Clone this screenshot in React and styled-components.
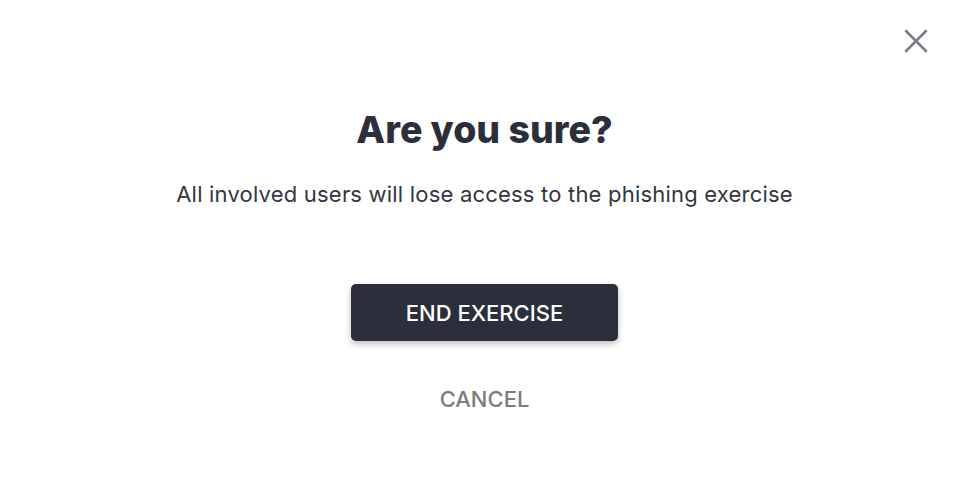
import React from 'react';
import styled, { createGlobalStyle } from 'styled-components';

const GlobalStyle = createGlobalStyle`
    html, body {
        margin: 0;
        padding: 0;
        background: #ffffff;
        font-family: "Inter", "Noto Sans", sans-serif;
    }
`;

const Modal = styled.div`
    width: 956px;
    height: 498px;
    box-sizing: border-box;
    position: relative;
    display: flex;
    flex-direction: column;
    align-items: center;
    padding: 104px 0 0 13px;
    background: #ffffff;
`;

const CloseButton = styled.button`
    position: absolute;
    top: 27px;
    right: 26px;
    width: 28px;
    height: 28px;
    padding: 0;
    border: none;
    background: transparent;
    cursor: pointer;
    display: flex;
    align-items: center;
    justify-content: center;
`;

const Title = styled.h1`
    margin: 0;
    font-size: 37.5px;
    line-height: 52px;
    font-weight: 800;
    color: #2b2e3b;
`;

const Message = styled.p`
    margin: 24px 0 0;
    font-size: 22px;
    line-height: 28px;
    letter-spacing: 0.2px;
    color: #333640;
`;

const PrimaryButton = styled.button`
    margin-top: 76px;
    width: 267px;
    height: 57px;
    border: none;
    border-radius: 5px;
    background: #2b2e3b;
    color: #ffffff;
    font-family: inherit;
    font-size: 22px;
    font-weight: 500;
    box-shadow: 0 3px 6px rgba(0, 0, 0, 0.25);
    cursor: pointer;
`;

const TextButton = styled.button`
    margin-top: 45px;
    border: none;
    background: transparent;
    color: #7b7c80;
    font-family: inherit;
    font-size: 22px;
    font-weight: 500;
    cursor: pointer;
    padding: 0;
`;

function App() {
    return (
        <>
            <GlobalStyle />
            <Modal>
                <CloseButton aria-label="Close">
                    <svg width="24" height="24" viewBox="0 0 24 24">
                        <path d="M2 2 L22 22 M22 2 L2 22" stroke="#7a7d88" strokeWidth="2.6" strokeLinecap="round" />
                    </svg>
                </CloseButton>
                <Title>Are you sure?</Title>
                <Message>All involved users will lose access to the phishing exercise</Message>
                <PrimaryButton>END EXERCISE</PrimaryButton>
                <TextButton>CANCEL</TextButton>
            </Modal>
        </>
    );
}

export default App;
